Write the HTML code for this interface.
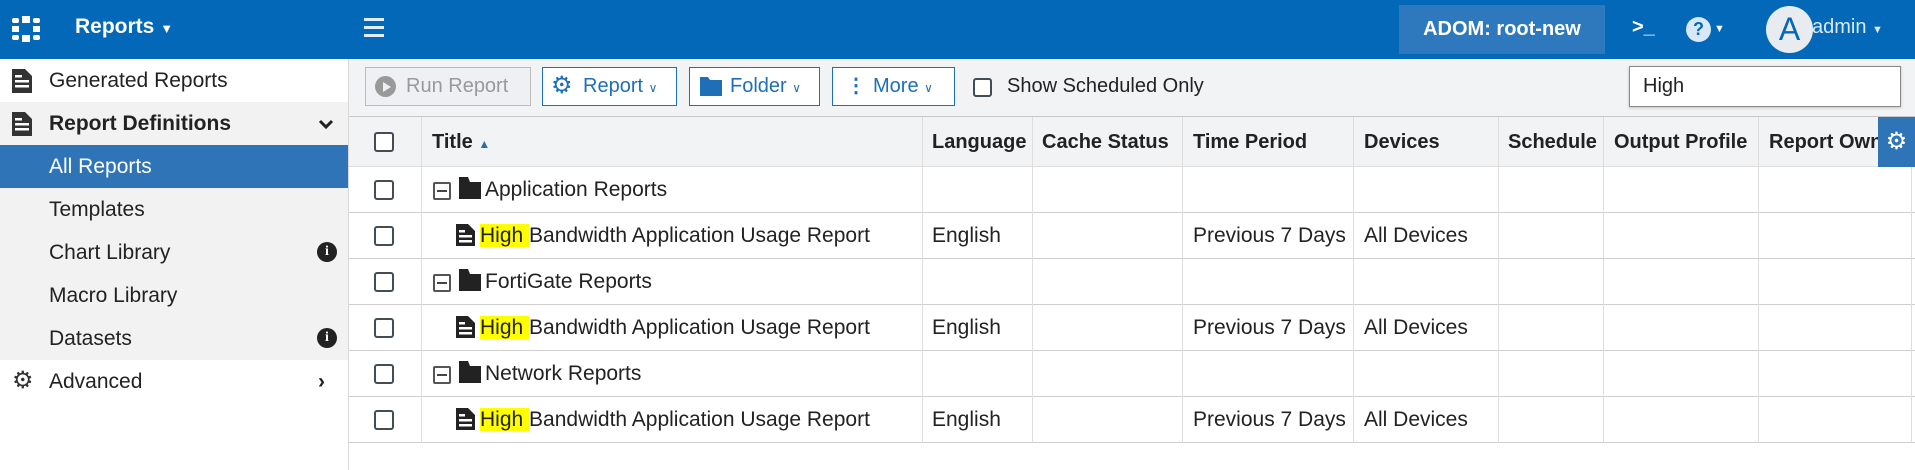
<!DOCTYPE html>
<html><head><meta charset="utf-8"><style>
*{box-sizing:border-box;margin:0;padding:0}
body{width:1915px;height:470px;overflow:hidden;font-family:"Liberation Sans",sans-serif;font-size:21px;color:#222;background:#fff;position:relative}
.abs{position:absolute}
.top{left:0;top:0;width:1915px;height:59px;background:#0268b7;color:#fff}
.side{left:0;top:59px;width:349px;height:411px;background:#fff;border-right:1px solid #d8d8d8}
.si{position:absolute;left:0;width:348px;height:43px;line-height:43px;padding-left:49px}
.tb{left:349px;top:59px;width:1566px;height:57px;background:#f2f3f5}
.btn{position:absolute;top:8px;height:39px;border:1px solid #1e6fb8;background:#fff;color:#1e6fb8;line-height:37px;font-size:20px;padding-left:40px}
.hdr{left:349px;top:116px;width:1566px;height:51px;background:#f2f3f5;border-top:1px solid #c8c8c8;border-bottom:1px solid #ddd}
.cb{position:absolute;width:20px;height:20px;border:2px solid #444c56;border-radius:3px;background:#fff}
.row{position:absolute;left:349px;width:1566px;height:46px;border-bottom:1px solid #cfcfcf}
.vl{position:absolute;top:4px;bottom:4px;width:1px;background:#ddd}
.t{position:absolute;line-height:46px;white-space:nowrap}
.hl{background:#ffff00}
.h{position:absolute;line-height:51px;font-weight:bold;white-space:nowrap;font-size:20px}
</style></head><body>
<div class="abs top">
 <svg class="abs" style="left:12px;top:16px" width="28" height="26" viewBox="0 0 28 26" fill="#fff">
  <rect x="0" y="2" width="7" height="5" rx="2"/><rect x="10" y="0" width="8" height="7"/><rect x="21" y="2" width="7" height="5" rx="2"/>
  <rect x="0" y="10" width="7" height="6"/><rect x="21" y="10" width="7" height="6"/>
  <rect x="0" y="19" width="7" height="5" rx="2"/><rect x="10" y="19" width="8" height="7"/><rect x="21" y="19" width="7" height="5" rx="2"/>
 </svg>
 <div class="abs" style="left:75px;top:15px;font-size:21px;font-weight:bold">Reports <span style="font-size:13px">▼</span></div>
 <div class="abs" style="left:364px;top:18px;width:20px;height:22px">
  <div style="height:3px;background:#e0ecf8;margin-bottom:5px"></div><div style="height:3px;background:#e0ecf8;margin-bottom:5px"></div><div style="height:3px;background:#e0ecf8"></div></div>
 <div class="abs" style="left:1399px;top:5px;width:206px;height:49px;background:#2e78bd;text-align:center;line-height:49px;font-weight:bold;font-size:20px">ADOM: root-new</div>
 <div class="abs" style="left:1632px;top:16px;font-size:20px;font-weight:bold">&gt;_</div>
 <div class="abs" style="left:1686px;top:17px;width:25px;height:25px;border-radius:50%;background:#d8e8f6;color:#0268b7;text-align:center;font-weight:bold;line-height:25px;font-size:18px">?</div>
 <div class="abs" style="left:1714px;top:23px;font-size:11px">▼</div>
 <div class="abs" style="left:1766px;top:6px;width:47px;height:47px;border-radius:50%;background:#e8ecf0;color:#0268b7;text-align:center;line-height:47px;font-size:32px">A</div>
 <div class="abs" style="left:1812px;top:16px;font-size:20px;color:#dbe9f6">admin <span style="font-size:11px">▼</span></div>
</div>
<div class="abs side">
 <div class="si" style="top:0">Generated Reports</div>
 <div class="si" style="top:43px;background:#f2f2f2;font-weight:bold">Report Definitions</div>
 <div class="si" style="top:86px;background:#2f74b7;color:#fff">All Reports</div>
 <div class="si" style="top:129px;background:#f2f2f2">Templates</div>
 <div class="si" style="top:172px;background:#f2f2f2">Chart Library</div>
 <div class="si" style="top:215px;background:#f2f2f2">Macro Library</div>
 <div class="si" style="top:258px;background:#f2f2f2">Datasets</div>
 <div class="si" style="top:301px">Advanced<span class="abs" style="left:318px;font-weight:bold">›</span></div>
 <svg class="abs" style="left:12px;top:10px" width="20" height="24"><path d="M0 0h13l7 7v17H0z" fill="#333"/><rect x="3" y="6" width="7" height="2.5" fill="#fff"/><rect x="3" y="11" width="14" height="2.5" fill="#fff"/><rect x="3" y="16" width="14" height="2.5" fill="#fff"/></svg>
 <svg class="abs" style="left:12px;top:53px" width="20" height="24"><path d="M0 0h13l7 7v17H0z" fill="#333"/><rect x="3" y="6" width="7" height="2.5" fill="#fff"/><rect x="3" y="11" width="14" height="2.5" fill="#fff"/><rect x="3" y="16" width="14" height="2.5" fill="#fff"/></svg>
 <svg class="abs" style="left:316px;top:58px" width="20" height="14"><path d="M4 4l6 6 6-6" stroke="#222" stroke-width="3" fill="none"/></svg>
 <div class="abs" style="left:317px;top:183px;width:20px;height:20px;border-radius:50%;background:#222;color:#fff;text-align:center;font-size:14px;font-weight:bold;line-height:20px;font-family:'Liberation Serif',serif">i</div>
 <div class="abs" style="left:317px;top:269px;width:20px;height:20px;border-radius:50%;background:#222;color:#fff;text-align:center;font-size:14px;font-weight:bold;line-height:20px;font-family:'Liberation Serif',serif">i</div>
 <div class="abs" style="left:12px;top:310px;font-size:24px;line-height:24px;color:#333">⚙</div>
</div>
<div class="abs tb">
 <div class="btn" style="left:16px;width:166px;border-color:#bbb;background:#eef0f3;color:#999"><span class="abs" style="left:9px;top:8px;width:21px;height:21px;border-radius:50%;background:#999"></span><span class="abs" style="left:17px;top:14px;border-left:8px solid #eef0f3;border-top:5px solid transparent;border-bottom:5px solid transparent"></span>Run Report</div>
 <div class="btn" style="left:193px;width:135px"><span class="abs" style="left:8px;top:-1px;font-size:24px">⚙</span>Report <span style="font-size:12px">&#x2228;</span></div>
 <div class="btn" style="left:340px;width:131px"><svg class="abs" style="left:10px;top:9px" width="22" height="19"><path d="M0 0h8l2 3h12v16H0z" fill="#1e6fb8"/></svg>Folder <span style="font-size:12px">&#x2228;</span></div>
 <div class="btn" style="left:483px;width:123px"><span class="abs" style="left:13px;top:0;font-weight:bold">⋮</span>More <span style="font-size:12px">&#x2228;</span></div>
 <div class="cb" style="left:624px;top:19px;width:19px;height:19px"></div>
 <div class="abs" style="left:658px;top:16px;font-size:20px">Show Scheduled Only</div>
 <div class="abs" style="left:1280px;top:7px;width:272px;height:41px;background:#fff;border:1px solid #888;box-shadow:0 1px 3px rgba(0,0,0,.2);padding-left:13px;line-height:39px;font-size:20px">High</div>
</div>
<div class="abs hdr">
 <div class="cb" style="left:25px;top:15px"></div>
 <div class="vl" style="left:72px;top:0;bottom:0"></div>
 <div class="h" style="left:83px">Title <span style="font-size:12px;color:#2a6bb0">▲</span></div>
 <div class="vl" style="left:573px;top:0;bottom:0"></div><div class="h" style="left:583px">Language</div>
 <div class="vl" style="left:683px;top:0;bottom:0"></div><div class="h" style="left:693px">Cache Status</div>
 <div class="vl" style="left:833px;top:0;bottom:0"></div><div class="h" style="left:844px">Time Period</div>
 <div class="vl" style="left:1004px;top:0;bottom:0"></div><div class="h" style="left:1015px">Devices</div>
 <div class="vl" style="left:1149px;top:0;bottom:0"></div><div class="h" style="left:1159px">Schedule</div>
 <div class="vl" style="left:1254px;top:0;bottom:0"></div><div class="h" style="left:1265px">Output Profile</div>
 <div class="vl" style="left:1409px;top:0;bottom:0"></div><div class="h" style="left:1420px">Report Owner</div>
 <div class="abs" style="left:1529px;top:0;width:37px;height:50px;background:#2f74b7;color:#fff;text-align:center;line-height:50px;font-size:24px">⚙</div>
</div>
<!-- rows -->
<div class="row" style="top:167px"><div class="cb" style="left:25px;top:13px"></div>
 <div class="abs" style="left:84px;top:15px;width:18px;height:18px;border:2px solid #555;border-radius:2px"><div style="margin:6px 2px 0;height:2px;background:#444"></div></div>
 <svg class="abs" style="left:110px;top:10px" width="22" height="22"><path d="M0 0h9l2 5h11v17H0z" fill="#222"/></svg>
 <div class="t" style="left:136px">Application Reports</div></div>
<div class="row" style="top:213px"><div class="cb" style="left:25px;top:13px"></div>
 <svg class="abs" style="left:107px;top:11px" width="19" height="22"><path d="M0 0h12l7 7v15H0z" fill="#222"/><rect x="3" y="6" width="6" height="2.5" fill="#fff"/><rect x="3" y="11" width="13" height="2.5" fill="#fff"/><rect x="3" y="16" width="13" height="2.5" fill="#fff"/></svg>
 <div class="t" style="left:131px"><span class="hl">High </span>Bandwidth Application Usage Report</div>
 <div class="t" style="left:583px">English</div><div class="t" style="left:844px">Previous 7 Days</div><div class="t" style="left:1015px">All Devices</div></div>
<div class="row" style="top:259px"><div class="cb" style="left:25px;top:13px"></div>
 <div class="abs" style="left:84px;top:15px;width:18px;height:18px;border:2px solid #555;border-radius:2px"><div style="margin:6px 2px 0;height:2px;background:#444"></div></div>
 <svg class="abs" style="left:110px;top:10px" width="22" height="22"><path d="M0 0h9l2 5h11v17H0z" fill="#222"/></svg>
 <div class="t" style="left:136px">FortiGate Reports</div></div>
<div class="row" style="top:305px"><div class="cb" style="left:25px;top:13px"></div>
 <svg class="abs" style="left:107px;top:11px" width="19" height="22"><path d="M0 0h12l7 7v15H0z" fill="#222"/><rect x="3" y="6" width="6" height="2.5" fill="#fff"/><rect x="3" y="11" width="13" height="2.5" fill="#fff"/><rect x="3" y="16" width="13" height="2.5" fill="#fff"/></svg>
 <div class="t" style="left:131px"><span class="hl">High </span>Bandwidth Application Usage Report</div>
 <div class="t" style="left:583px">English</div><div class="t" style="left:844px">Previous 7 Days</div><div class="t" style="left:1015px">All Devices</div></div>
<div class="row" style="top:351px"><div class="cb" style="left:25px;top:13px"></div>
 <div class="abs" style="left:84px;top:15px;width:18px;height:18px;border:2px solid #555;border-radius:2px"><div style="margin:6px 2px 0;height:2px;background:#444"></div></div>
 <svg class="abs" style="left:110px;top:10px" width="22" height="22"><path d="M0 0h9l2 5h11v17H0z" fill="#222"/></svg>
 <div class="t" style="left:136px">Network Reports</div></div>
<div class="row" style="top:397px"><div class="cb" style="left:25px;top:13px"></div>
 <svg class="abs" style="left:107px;top:11px" width="19" height="22"><path d="M0 0h12l7 7v15H0z" fill="#222"/><rect x="3" y="6" width="6" height="2.5" fill="#fff"/><rect x="3" y="11" width="13" height="2.5" fill="#fff"/><rect x="3" y="16" width="13" height="2.5" fill="#fff"/></svg>
 <div class="t" style="left:131px"><span class="hl">High </span>Bandwidth Application Usage Report</div>
 <div class="t" style="left:583px">English</div><div class="t" style="left:844px">Previous 7 Days</div><div class="t" style="left:1015px">All Devices</div></div>
<div class="abs" style="left:421px;top:167px;width:1px;height:276px;background:#ddd"></div>
<div class="abs" style="left:922px;top:167px;width:1px;height:276px;background:#ddd"></div>
<div class="abs" style="left:1032px;top:167px;width:1px;height:276px;background:#ddd"></div>
<div class="abs" style="left:1182px;top:167px;width:1px;height:276px;background:#ddd"></div>
<div class="abs" style="left:1353px;top:167px;width:1px;height:276px;background:#ddd"></div>
<div class="abs" style="left:1498px;top:167px;width:1px;height:276px;background:#ddd"></div>
<div class="abs" style="left:1603px;top:167px;width:1px;height:276px;background:#ddd"></div>
<div class="abs" style="left:1758px;top:167px;width:1px;height:276px;background:#ddd"></div>
<div class="abs" style="left:1911px;top:167px;width:1px;height:276px;background:#ddd"></div>
</body></html>
